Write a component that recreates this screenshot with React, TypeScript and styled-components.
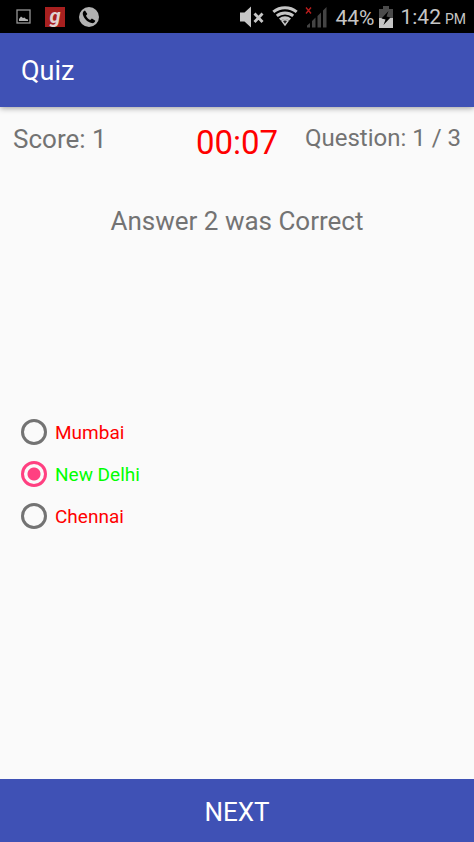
import React, { useState } from 'react';
import styled, { createGlobalStyle } from 'styled-components';

const GlobalStyle = createGlobalStyle`
  * { box-sizing: border-box; }
  body {
    margin: 0;
    background: #fafafa;
    font-family: Roboto, "Liberation Sans", sans-serif;
  }
`;

const Screen = styled.div`
  display: flex;
  flex-direction: column;
  min-height: 100vh;
  background: #fafafa;
`;

const StatusBar = styled.div`
  display: flex;
  align-items: center;
  justify-content: space-between;
  height: 33px;
  padding: 0 8px 0 16px;
  background: #000;
  color: #c6c6c6;
`;

const Notifications = styled.div`
  display: flex;
  align-items: center;
  gap: 14px;
`;

const SystemIcons = styled.div`
  display: flex;
  align-items: center;
  gap: 7px;
`;

const PowerStatus = styled.div`
  display: flex;
  align-items: center;
  gap: 5px;
`;

const AppBadge = styled.span`
  width: 20px;
  height: 20px;
  background: #a8201f;
  color: #e0d2d2;
  font-size: 20px;
  font-style: italic;
  font-weight: 700;
  line-height: 18px;
  text-align: center;
`;

const StatusText = styled.span`
  padding-top: 2px;
  font-size: 21px;
  line-height: 30px;
`;

const Meridiem = styled.span`
  margin-left: 4px;
  font-size: 14px;
`;

const AppBar = styled.header`
  display: flex;
  align-items: center;
  height: 74px;
  padding: 2px 21px 0;
  background: #3f51b5;
  box-shadow: 0 1px 6px rgba(0, 0, 0, 0.4);
`;

const Title = styled.h1`
  margin: 0;
  color: #fff;
  font-size: 27px;
  font-weight: 400;
  line-height: 32px;
`;

const Content = styled.main`
  display: flex;
  flex: 1;
  flex-direction: column;
`;

const Stats = styled.div`
  display: grid;
  grid-template-columns: 1fr auto 1fr;
  align-items: start;
  padding: 16px 13px 0;
  color: #737373;
`;

const Score = styled.span`
  font-size: 26px;
  line-height: 32px;
`;

const Timer = styled.span`
  color: #f00;
  font-size: 33px;
  line-height: 40px;
`;

const Progress = styled.span`
  font-size: 24px;
  line-height: 30px;
  text-align: right;
`;

const Message = styled.p`
  margin: 42px 0 0;
  color: #737373;
  font-size: 26px;
  line-height: 32px;
  text-align: center;
`;

const Options = styled.fieldset`
  display: flex;
  flex-direction: column;
  margin: 174px 0 0;
  padding: 0 21px;
  border: 0;
`;

const Option = styled.label<{ $correct: boolean }>`
  display: flex;
  align-items: center;
  gap: 8px;
  height: 42px;
  color: ${({ $correct }) => ($correct ? '#0f0' : '#f00')};
  font-size: 19px;
`;

const Radio = styled.input`
  appearance: none;
  width: 26px;
  height: 26px;
  margin: 0;
  border: 3px solid #737373;
  border-radius: 50%;

  &:checked {
    border-color: #ff4081;
    background: radial-gradient(circle, #ff4081 6px, transparent 7px);
  }
`;

const NextButton = styled.button`
  height: 63px;
  padding: 2px 0 0;
  border: 0;
  background: #3f51b5;
  color: #fff;
  font-family: inherit;
  font-size: 26px;
  line-height: 32px;
`;

const PictureIcon = () => (
  <svg width="15" height="15" viewBox="0 0 15 15" aria-hidden="true">
    <rect x="1" y="1" width="13" height="13" fill="none" stroke="#969696" strokeWidth="1.3" />
    <path d="M3 12V10L5 7.5L7 9L8.5 8.5L10 10L12 10.5V12Z" fill="#b4b4b4" />
  </svg>
);

const CallIcon = () => (
  <svg width="20" height="20" viewBox="0 0 20 20" aria-hidden="true">
    <circle cx="10" cy="10" r="10" fill="#b2b2b2" />
    <path
      d="M6 3.6L8.3 7L7 8.7C7.8 10.6 9.3 12.1 11.2 13L12.9 11.6L16.3 13.7C15.8 15.6 14.4 16.5 12.6 16.1C8.1 15 4.8 11.5 3.8 7.3C3.5 5.6 4.3 4.2 6 3.6Z"
      fill="#000"
    />
  </svg>
);

const MuteIcon = () => (
  <svg width="26" height="22" viewBox="0 0 26 22" aria-hidden="true">
    <path d="M1 6.5H5.5L12 0.5V21.5L5.5 15.5H1Z" fill="#c6c6c6" />
    <path d="M15.5 7.5L23.5 16M23.5 7.5L15.5 16" stroke="#c6c6c6" strokeWidth="2.8" />
  </svg>
);

const WifiIcon = () => (
  <svg width="26" height="24" viewBox="0 0 26 24" aria-hidden="true">
    <g fill="none" stroke="#c6c6c6" strokeWidth="3">
      <path d="M1.3 6.8C8.2 1.3 17.8 1.3 24.7 6.8" />
      <path d="M4.8 10.8C9.6 6.9 16.4 6.9 21.2 10.8" />
      <path d="M8 14.6C10.9 12 15.1 12 18 14.6" />
    </g>
    <path d="M10 16C11.7 14.7 14.3 14.7 16 16L13 20Z" fill="#222" stroke="#c6c6c6" strokeWidth="1.5" />
  </svg>
);

const SignalIcon = () => (
  <svg width="23" height="22" viewBox="0 0 23 22" aria-hidden="true">
    <path d="M2 21.5V19.5L5 17V21.5ZM7 21.5V15L10.5 11.5V21.5ZM12.5 21.5V10L16 6.5V21.5ZM18 21.5V4.5L21.5 1V21.5Z" fill="#444" />
    <path d="M1 1.5L6 7.5M6 1.5L1 7.5" stroke="#b81c1c" strokeWidth="1.4" />
  </svg>
);

const BatteryIcon = () => (
  <svg width="14" height="22" viewBox="0 0 14 22" aria-hidden="true">
    <path d="M4 0H10V3H14V22H0V3H4Z" fill="#4b4b4b" />
    <path d="M0 12H14V22H0Z" fill="#c6c6c6" />
    <path d="M9.5 5L2.5 12.5L6.5 13.5L4.5 19L11.5 11.5L7.5 10.5Z" fill="#000" />
  </svg>
);

const options = ['Mumbai', 'New Delhi', 'Chennai'];
const correctAnswer = 'New Delhi';

export default function App() {
  const [selected, setSelected] = useState(correctAnswer);

  return (
    <>
      <GlobalStyle />
      <Screen>
        <StatusBar>
          <Notifications>
            <PictureIcon />
            <AppBadge>g</AppBadge>
            <CallIcon />
          </Notifications>
          <SystemIcons>
            <MuteIcon />
            <WifiIcon />
            <SignalIcon />
            <PowerStatus>
              <StatusText>44%</StatusText>
              <BatteryIcon />
            </PowerStatus>
            <StatusText>
              1:42<Meridiem>PM</Meridiem>
            </StatusText>
          </SystemIcons>
        </StatusBar>
        <AppBar>
          <Title>Quiz</Title>
        </AppBar>
        <Content>
          <Stats>
            <Score>Score: 1</Score>
            <Timer>00:07</Timer>
            <Progress>Question: 1 / 3</Progress>
          </Stats>
          <Message>Answer 2 was Correct</Message>
          <Options aria-label="Answers">
            {options.map((name) => (
              <Option key={name} $correct={name === correctAnswer}>
                <Radio
                  type="radio"
                  name="answer"
                  value={name}
                  checked={selected === name}
                  onChange={() => setSelected(name)}
                />
                {name}
              </Option>
            ))}
          </Options>
        </Content>
        <NextButton type="button">NEXT</NextButton>
      </Screen>
    </>
  );
}
